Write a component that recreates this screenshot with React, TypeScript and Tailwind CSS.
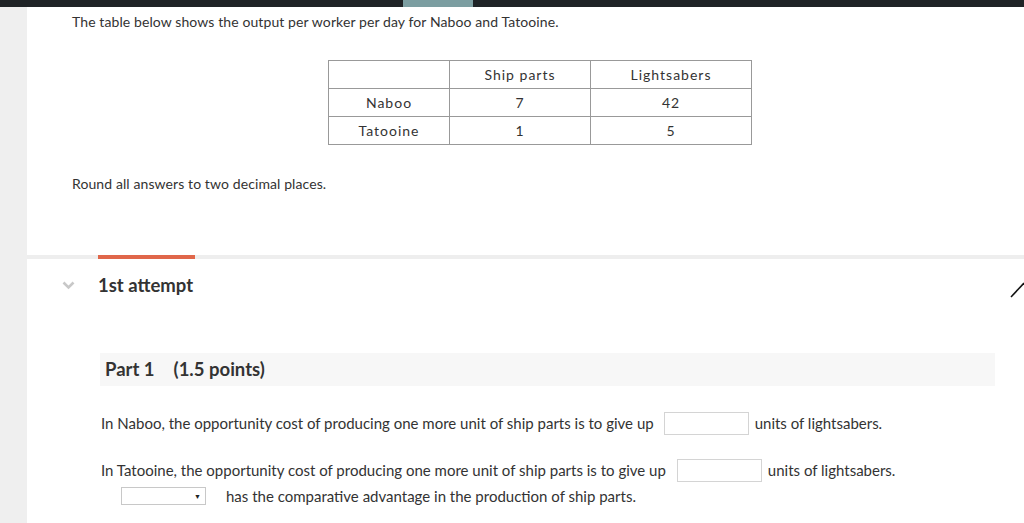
export default function App() {
  const font = { fontFamily: 'Lato, "Open Sans", sans-serif' };
  return (
    <div className="relative w-[1024px] h-[523px] overflow-hidden bg-white text-[#333]" style={font}>
      {/* top bar */}
      <div className="h-[7px] bg-[#1f2326] flex">
        <div className="ml-[403px] w-[70px] bg-[#7c9ea1]" />
      </div>
      <div className="flex h-[516px]">
        <div className="w-[27px] bg-[#efefef] shrink-0" />
        <div className="flex-1 flex flex-col">
          <div className="pl-[45px] pt-[7px]">
            <p className="text-[14px] leading-[16px] tracking-[0.1px]">
              The table below shows the output per worker per day for Naboo and Tatooine.
            </p>
            <table className="mt-[30px] ml-[256px] border-collapse text-[14px] tracking-[1px] text-center">
              <tbody>
                <tr className="h-[28px]">
                  <td className="w-[121px] border border-[#999]"></td>
                  <td className="w-[141px] border border-[#999]">Ship parts</td>
                  <td className="w-[161px] border border-[#999]">Lightsabers</td>
                </tr>
                <tr className="h-[28px]">
                  <td className="border border-[#999]">Naboo</td>
                  <td className="border border-[#999]">7</td>
                  <td className="border border-[#999]">42</td>
                </tr>
                <tr className="h-[28px]">
                  <td className="border border-[#999]">Tatooine</td>
                  <td className="border border-[#999]">1</td>
                  <td className="border border-[#999]">5</td>
                </tr>
              </tbody>
            </table>
            <p className="mt-[31px] text-[14px] leading-[16px] tracking-[0.1px]">Round all answers to two decimal places.</p>
          </div>

          {/* separator */}
          <div className="mt-[63px] h-[4px] bg-[#eeeeee] flex">
            <div className="ml-[71px] w-[97px] bg-[#e0674a]" />
          </div>

          <div className="mt-[16px] flex items-center h-[20px]">
            <svg className="ml-[35px] w-[13px] h-[9px]" viewBox="0 0 13 9">
              <path d="M1.5 1.5 L6.5 6.5 L11.5 1.5" stroke="#c8c8c8" strokeWidth="2.6" fill="none" />
            </svg>
            <span className="ml-[23px] text-[18.5px] font-bold leading-[20px]">1st attempt</span>
          </div>

          <div className="mt-[58px] ml-[73px] w-[895px] h-[33px] bg-[#f7f7f7] flex items-center pl-[5px]">
            <span className="text-[18.5px] font-bold">Part 1</span>
            <span className="ml-[19px] text-[18.5px] font-bold">(1.5 points)</span>
          </div>

          <div className="pl-[74px] text-[15px]">
            <div className="mt-[26px] flex items-center h-[23px]">
              <span>In Naboo, the opportunity cost of producing one more unit of ship parts is to give up</span>
              <div className="ml-[10px] w-[85px] h-[23px] border border-[#d4d4d4]" />
              <span className="ml-[6px]">units of lightsabers.</span>
            </div>
            <div className="mt-[24px] flex items-center h-[23px]">
              <span>In Tatooine, the opportunity cost of producing one more unit of ship parts is to give up</span>
              <div className="ml-[11px] w-[85px] h-[23px] border border-[#d4d4d4]" />
              <span className="ml-[6px]">units of lightsabers.</span>
            </div>
            <div className="mt-[5px] flex items-center h-[18px]">
              <div className="ml-[20px] w-[85px] h-[18px] border border-[#c8c8c8] flex items-center justify-end pr-[4px]">
                <span className="text-[7px] text-[#222]">▼</span>
              </div>
              <span className="ml-[20px]">has the comparative advantage in the production of ship parts.</span>
            </div>
          </div>
        </div>
      </div>

      {/* stray pen stroke at right edge */}
      <svg className="absolute left-[1010px] top-[280px] w-[14px] h-[18px]" viewBox="0 0 14 18">
        <path d="M1 17 L14 3" stroke="#111" strokeWidth="1.6" fill="none" />
      </svg>
    </div>
  );
}
